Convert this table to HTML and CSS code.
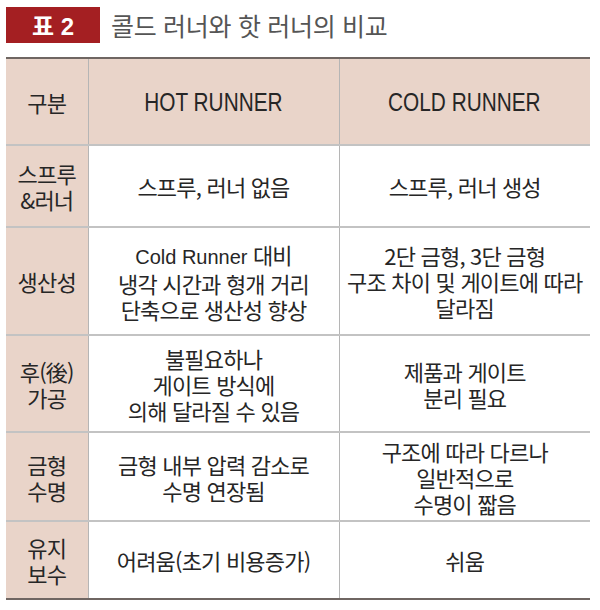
FILE: index.html
```html
<!DOCTYPE html>
<html lang="ko">
<head>
<meta charset="utf-8">
<link rel="stylesheet" href="styles.css">
</head>
<body>
<div class="page">
  <div class="title-row">
    <div class="badge">표 2</div>
    <div class="title">콜드 러너와 핫 러너의 비교</div>
  </div>
  <table class="cmp">
    <colgroup>
      <col class="c1"><col class="c2"><col class="c3">
    </colgroup>
    <thead>
      <tr class="r-head">
        <th class="label">구분</th>
        <th class="head"><span class="cond">HOT RUNNER</span></th>
        <th class="head"><span class="cond">COLD RUNNER</span></th>
      </tr>
    </thead>
    <tbody>
      <tr class="r1">
        <td class="label">스프루<br>&amp;러너</td>
        <td>스프루, 러너 없음</td>
        <td>스프루, 러너 생성</td>
      </tr>
      <tr class="r2">
        <td class="label">생산성</td>
        <td><span class="latin">Cold Runner</span> 대비<br>냉각 시간과 형개 거리<br>단축으로 생산성 향상</td>
        <td>2단 금형, 3단 금형<br>구조 차이 및 게이트에 따라<br>달라짐</td>
      </tr>
      <tr class="r3">
        <td class="label">후(後)<br>가공</td>
        <td>불필요하나<br>게이트 방식에<br>의해 달라질 수 있음</td>
        <td>제품과 게이트<br>분리 필요</td>
      </tr>
      <tr class="r4">
        <td class="label">금형<br>수명</td>
        <td>금형 내부 압력 감소로<br>수명 연장됨</td>
        <td>구조에 따라 다르나<br>일반적으로<br>수명이 짧음</td>
      </tr>
      <tr class="r5">
        <td class="label">유지<br>보수</td>
        <td>어려움(초기 비용증가)</td>
        <td>쉬움</td>
      </tr>
    </tbody>
  </table>
</div>
</body>
</html>
```
FILE: styles.css
```css
html, body {
  margin: 0;
  padding: 0;
  background: #ffffff;
}

.page {
  padding: 7px 10px 0 6px;
  font-family: "Liberation Sans", "Noto Sans CJK KR", sans-serif;
  color: #262626;
}

.title-row {
  display: flex;
  align-items: center;
  gap: 11px;
  height: 36px;
}

.badge {
  width: 94px;
  height: 36px;
  background: #a41f22;
  color: #ffffff;
  font-family: "Liberation Sans", "Noto Sans CJK KR", sans-serif;
  font-weight: bold;
  font-size: 24px;
  display: flex;
  align-items: center;
  justify-content: center;
  padding-bottom: 1px;
  box-sizing: border-box;
}

.title {
  font-family: "Noto Sans CJK KR", sans-serif;
  font-size: 25px;
  color: #555555;
  letter-spacing: -0.3px;
}

.cmp {
  margin-top: 14px;
  width: 584px;
  border-collapse: collapse;
  table-layout: fixed;
  border-top: 2px solid #6f6662;
  border-bottom: 2px solid #6f6662;
}

.c1 { width: 82px; }
.c2 { width: 251px; }
.c3 { width: 251px; }

.cmp th,
.cmp td {
  padding: 0;
  text-align: center;
  vertical-align: middle;
  font-size: 22px;
  line-height: 26px;
  letter-spacing: -0.8px;
  font-weight: normal;
  font-family: "Noto Sans CJK KR", sans-serif;
  color: #262626;
  border-left: 1px solid #b5b5b5;
  border-bottom: 2px solid #c3c3c3;
}

.cmp th:first-child,
.cmp td:first-child {
  border-left: none;
}

.cmp tbody tr:last-child td {
  border-bottom: none;
}

.cmp thead th,
.cmp .label {
  background: #e9d4c9;
}

.latin {
  font-family: "Liberation Sans", sans-serif;
  font-size: 20px;
  letter-spacing: 0;
}

.cond {
  display: inline-block;
  font-family: "Liberation Sans", sans-serif;
  font-size: 26px;
  letter-spacing: 0;
  transform: scaleX(0.8);
}

.r-head { height: 87px; }
.r1 { height: 82px; }
.r2 { height: 108px; }
.r3 { height: 97px; }
.r4 { height: 89px; }
.r5 { height: 78px; }
```
